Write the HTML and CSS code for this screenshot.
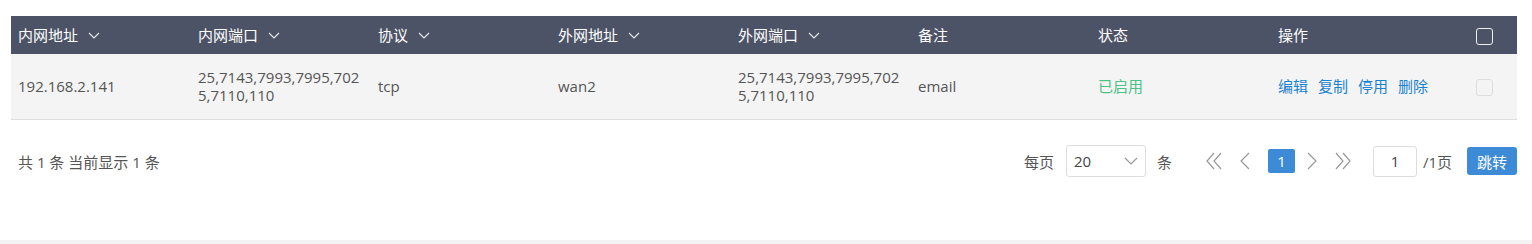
FILE: index.html
```html
<!DOCTYPE html>
<html lang="zh-CN">
<head>
    <meta charset="UTF-8">
    <title>端口映射</title>
    <link rel="stylesheet" href="styles.css">
</head>
<body>
    <div class="page">
        <table class="grid">
            <colgroup>
                <col class="c"><col class="c"><col class="c"><col class="c">
                <col class="c"><col class="c"><col class="c"><col class="c">
                <col>
            </colgroup>
            <thead>
                <tr>
                    <th>内网地址 <svg class="chev" viewBox="0 0 12 7"><polyline points="1,1 6,6 11,1"/></svg></th>
                    <th>内网端口 <svg class="chev" viewBox="0 0 12 7"><polyline points="1,1 6,6 11,1"/></svg></th>
                    <th>协议 <svg class="chev" viewBox="0 0 12 7"><polyline points="1,1 6,6 11,1"/></svg></th>
                    <th>外网地址 <svg class="chev" viewBox="0 0 12 7"><polyline points="1,1 6,6 11,1"/></svg></th>
                    <th>外网端口 <svg class="chev" viewBox="0 0 12 7"><polyline points="1,1 6,6 11,1"/></svg></th>
                    <th>备注</th>
                    <th>状态</th>
                    <th>操作</th>
                    <th class="check-col"><span class="box head-box"></span></th>
                </tr>
            </thead>
            <tbody>
                <tr>
                    <td>192.168.2.141</td>
                    <td class="wrap">25,7143,7993,7995,7025,7110,110</td>
                    <td>tcp</td>
                    <td>wan2</td>
                    <td class="wrap">25,7143,7993,7995,7025,7110,110</td>
                    <td>email</td>
                    <td class="on">已启用</td>
                    <td class="ops">
                        <a href="#">编辑</a><a href="#">复制</a><a href="#">停用</a><a href="#">删除</a>
                    </td>
                    <td class="check-col"><span class="box row-box"></span></td>
                </tr>
            </tbody>
        </table>

        <div class="pager">
            <div class="total">共 1 条 当前显示 1 条</div>
            <div class="pager-right">
                <span>每页</span>
                <div class="select">
                    <span>20</span>
                    <svg class="sel-chev" viewBox="0 0 14 8"><polyline points="1,1 7,7 13,1"/></svg>
                </div>
                <span class="unit">条</span>
                <div class="nav">
                    <svg class="nav-ic wide" viewBox="0 0 16 18"><polyline points="8,1 1,9 8,17"/><polyline points="15,1 8,9 15,17"/></svg>
                    <svg class="nav-ic" viewBox="0 0 10 18"><polyline points="9,1 1,9 9,17"/></svg>
                    <span class="current">1</span>
                    <svg class="nav-ic" viewBox="0 0 10 18"><polyline points="1,1 9,9 1,17"/></svg>
                    <svg class="nav-ic wide" viewBox="0 0 16 18"><polyline points="1,1 8,9 1,17"/><polyline points="8,1 15,9 8,17"/></svg>
                </div>
                <div class="jump-input">1</div>
                <span class="pages">/1页</span>
                <button class="jump">跳转</button>
            </div>
        </div>
    </div>
    <div class="footer-strip"></div>
</body>
</html>
```

FILE: styles.css
```css
body {
    margin: 0;
    font-family: "Open Sans", "Noto Sans CJK SC", sans-serif;
    font-size: 15px;
    color: #555;
    background: #fff;
}

.page {
    height: 240px;
    padding: 16px 15px 0 11px;
    box-sizing: border-box;
}

.grid {
    width: 100%;
    border-collapse: collapse;
    table-layout: fixed;
}

.grid col.c {
    width: 180px;
}

.grid th {
    background: #4d5367;
    color: #fff;
    font-weight: normal;
    text-align: left;
    height: 38px;
    padding: 0 7px;
    line-height: 18px;
    white-space: nowrap;
}

.chev {
    width: 12px;
    height: 7px;
    margin-left: 6px;
    vertical-align: 2px;
    fill: none;
    stroke: #e6e8ee;
    stroke-width: 1.2;
}

.grid td {
    background: #f4f4f4;
    padding: 14px 7px 15px;
    line-height: 18px;
    border-bottom: 1px solid #dddddd;
    vertical-align: middle;
}

.grid td.wrap {
    word-break: break-all;
}

.grid td.on {
    color: #4cc285;
}

.ops a {
    color: #1b82cf;
    text-decoration: none;
    margin-right: 10px;
}

.grid .check-col {
    text-align: center;
    padding: 0;
}

.box {
    display: inline-block;
    width: 17px;
    height: 17px;
    box-sizing: border-box;
    border-radius: 3px;
    vertical-align: middle;
}

.head-box {
    border: 1px solid #f0f0f0;
}

.row-box {
    border: 1px solid #dcdcdc;
    background: #f4f4f4;
}

.pager {
    display: flex;
    justify-content: space-between;
    align-items: center;
    margin-top: 25px;
}

.total {
    padding-left: 7px;
}

.pager-right {
    display: flex;
    align-items: center;
}

.select {
    display: flex;
    align-items: center;
    justify-content: space-between;
    width: 80px;
    height: 32px;
    box-sizing: border-box;
    border: 1px solid #dddddd;
    border-radius: 3px;
    padding: 0 7px 0 7px;
    margin-left: 12px;
    color: #444;
}

.sel-chev {
    width: 14px;
    height: 8px;
    fill: none;
    stroke: #999;
    stroke-width: 1.2;
}

.unit {
    margin-left: 11px;
}

.nav {
    display: flex;
    align-items: center;
    margin-left: 34px;
}

.nav-ic {
    width: 10px;
    height: 18px;
    fill: none;
    stroke: #999;
    stroke-width: 1.2;
    margin-right: 18px;
}

.nav-ic.wide {
    width: 16px;
}

.current {
    display: inline-block;
    width: 27px;
    height: 24px;
    line-height: 24px;
    text-align: center;
    background: #3d8bd6;
    color: #fff;
    border-radius: 2px;
    margin-right: 12px;
}

.jump-input {
    width: 44px;
    height: 31px;
    line-height: 29px;
    box-sizing: border-box;
    border: 1px solid #dddddd;
    border-radius: 3px;
    text-align: center;
    color: #444;
    margin-left: 4px;
}

.pages {
    margin-left: 6px;
}

.jump {
    margin-left: 15px;
    width: 50px;
    height: 28px;
    border: none;
    border-radius: 3px;
    background: #3d8bd6;
    color: #fff;
    font-family: inherit;
    font-size: 15px;
    padding: 0;
}

.footer-strip {
    height: 4px;
    background: #f3f3f3;
}
```
